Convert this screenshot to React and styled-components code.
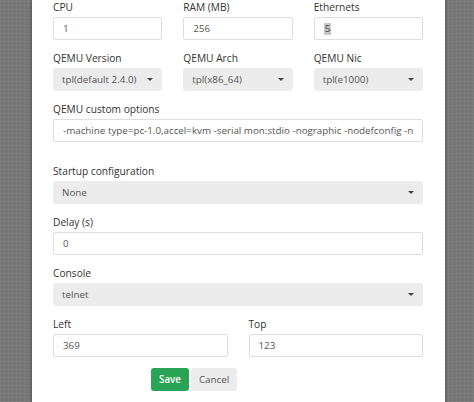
import React from 'react'
import styled, { createGlobalStyle } from 'styled-components'

const GlobalStyle = createGlobalStyle`
    html, body {
        margin: 0;
        padding: 0;
        overflow: hidden;
    }
    body {
        font-family: "Open Sans", "Noto Sans", "DejaVu Sans", sans-serif;
    }
`;

const numberFields = [
    { label: 'CPU', value: '1' },
    { label: 'RAM (MB)', value: '256' },
    { label: 'Ethernets', value: '5', selected: true },
]

const qemuSelects = [
    { label: 'QEMU Version', value: 'tpl(default 2.4.0)' },
    { label: 'QEMU Arch', value: 'tpl(x86_64)' },
    { label: 'QEMU Nic', value: 'tpl(e1000)' },
]

const App = () => {
    return (
        <>
            <GlobalStyle />
            <StCanvas>
                <StModal>
                    <StRow cols={3}>
                        {numberFields.map((f) => (
                            <StGroup key={f.label}>
                                <StLabel>{f.label}</StLabel>
                                <StTextBox>
                                    <StValue>
                                        {f.selected ? <StSelected>{f.value}</StSelected> : f.value}
                                    </StValue>
                                </StTextBox>
                            </StGroup>
                        ))}
                    </StRow>
                    <StRow cols={3}>
                        {qemuSelects.map((f) => (
                            <StGroup key={f.label}>
                                <StLabel>{f.label}</StLabel>
                                <StSelect>
                                    <span>{f.value}</span>
                                    <StCaret />
                                </StSelect>
                            </StGroup>
                        ))}
                    </StRow>
                    <StGroup spaced>
                        <StLabel>QEMU custom options</StLabel>
                        <StTextBox>
                            <StValue>
                                -machine type=pc-1.0,accel=kvm -serial mon:stdio -nographic -nodefconfig -nodefaults -rtc base=utc
                            </StValue>
                        </StTextBox>
                    </StGroup>
                    <StGroup>
                        <StLabel>Startup configuration</StLabel>
                        <StSelect>
                            <span>None</span>
                            <StCaret />
                        </StSelect>
                    </StGroup>
                    <StGroup>
                        <StLabel>Delay (s)</StLabel>
                        <StTextBox><StValue>0</StValue></StTextBox>
                    </StGroup>
                    <StGroup>
                        <StLabel>Console</StLabel>
                        <StSelect>
                            <span>telnet</span>
                            <StCaret />
                        </StSelect>
                    </StGroup>
                    <StRow cols={2}>
                        <StGroup>
                            <StLabel>Left</StLabel>
                            <StTextBox><StValue>369</StValue></StTextBox>
                        </StGroup>
                        <StGroup>
                            <StLabel>Top</StLabel>
                            <StTextBox><StValue>123</StValue></StTextBox>
                        </StGroup>
                    </StRow>
                    <StActions>
                        <StButton primary>Save</StButton>
                        <StButton>Cancel</StButton>
                    </StActions>
                </StModal>
            </StCanvas>
        </>
    )
}

export default App

const StCanvas = styled.div`
    width: 474px;
    height: 402px;
    overflow: hidden;
    background-color: #747474;
    background-image:
        repeating-linear-gradient(0deg, rgba(255,255,255,0.05) 0 1px, transparent 1px 4px),
        repeating-linear-gradient(90deg, rgba(255,255,255,0.05) 0 1px, transparent 1px 4px);
`;

const StModal = styled.div`
    width: 413px;
    height: 420px;
    margin-left: 32px;
    box-sizing: border-box;
    padding: 0 22px 0 21px;
    background-color: #fff;
    box-shadow: 0 0 3px rgba(0,0,0,0.45);
`;

const StRow = styled.div`
    display: grid;
    grid-template-columns: repeat(${(p) => p.cols}, 1fr);
    column-gap: 21px;
`;

const StGroup = styled.div`
    display: flex;
    flex-direction: column;
    min-width: 0;
    margin-bottom: ${(p) => (p.spaced ? '22px' : '11px')};
`;

const StLabel = styled.label`
    font-size: 10.2px;
    line-height: 15px;
    color: #333;
    margin-bottom: 2px;
`;

const StTextBox = styled.div`
    height: 23px;
    box-sizing: border-box;
    padding: 0 9px;
    border: 1px solid #dedede;
    border-radius: 2px;
    background: #fff;
    font-size: 9.8px;
    line-height: 21px;
    color: #555;
`;

const StValue = styled.span`
    display: block;
    white-space: nowrap;
    overflow: hidden;
`;

const StSelected = styled.span`
    display: inline-block;
    padding: 0 1px;
    line-height: 12px;
    background: #c8c8c8;
    color: #444;
`;

const StSelect = styled.div`
    height: 23px;
    box-sizing: border-box;
    display: flex;
    align-items: center;
    justify-content: space-between;
    padding: 0 9px 0 9px;
    border-radius: 3px;
    background: #ececec;
    font-size: 9.8px;
    color: #555;
    white-space: nowrap;
`;

const StCaret = styled.i`
    width: 0;
    height: 0;
    border-left: 3px solid transparent;
    border-right: 3px solid transparent;
    border-top: 3px solid #444;
`;

const StActions = styled.div`
    display: flex;
    gap: 2px;
    padding-left: 98px;
`;

const StButton = styled.button`
    height: 23px;
    padding: 0 8px;
    border: none;
    border-radius: 3px;
    font-family: inherit;
    font-size: 9.8px;
    font-weight: ${(p) => (p.primary ? 600 : 400)};
    color: ${(p) => (p.primary ? '#fff' : '#555')};
    background: ${(p) => (p.primary ? '#28a454' : '#ececec')};
`;
